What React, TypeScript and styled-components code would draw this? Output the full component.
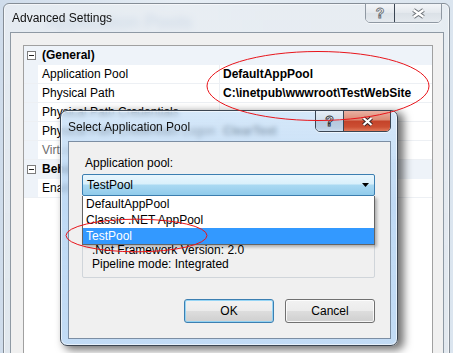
import React from 'react';
import styled, { createGlobalStyle } from 'styled-components';

const Global = createGlobalStyle`
  html, body { margin: 0; padding: 0; }
  body {
    font-family: "Liberation Sans", Arial, sans-serif;
    font-size: 12px;
    color: #000;
  }
  * { box-sizing: border-box; }
`;

const Desktop = styled.div`
  position: relative;
  width: 453px;
  height: 353px;
  overflow: hidden;
  background: linear-gradient(90deg, #cfdceb, #e6edf4 40%, #dbe5ef);
`;

const BackWindow = styled.div`
  position: absolute;
  inset: 0;
  padding: 11px 0 0 46px;
`;

const BackHeading = styled.div`
  font-size: 19px;
  color: #2f64a8;
`;

/* ---------- outer (inactive) window ---------- */

const OuterWindow = styled.div`
  position: absolute;
  left: 3px;
  top: 3px;
  width: 447px;
  height: 356px;
  display: flex;
  flex-direction: column;
  border: 1px solid #858d96;
  border-radius: 6px 6px 0 0;
  background: linear-gradient(rgba(232, 237, 242, 0.86), rgba(226, 232, 238, 0.9));
  backdrop-filter: blur(3px);
  box-shadow: inset 0 0 0 1px rgba(255, 255, 255, 0.55);
  padding: 0 5px 0 6px;
`;

const TitleBar = styled.div<{ $h: number; $mr: number }>`
  display: flex;
  align-items: flex-start;
  height: ${(p) => p.$h}px;
  flex: none;
  margin-right: ${(p) => p.$mr}px;
`;

const TitleText = styled.div<{ $top: number; $left: number }>`
  padding-top: ${(p) => p.$top}px;
  padding-left: ${(p) => p.$left}px;
  line-height: 14px;
  font-size: 12px;
  color: #111;
  white-space: nowrap;
`;

const CaptionGroup = styled.div<{ $active?: boolean }>`
  display: flex;
  margin-left: auto;
  margin-top: -1px;
  height: ${(p) => (p.$active ? 22 : 20)}px;
  border: 1px solid ${(p) => (p.$active ? '#3a4553' : '#8f98a2')};
  border-radius: 0 0 5px 5px;
  overflow: hidden;
  box-shadow: 0 1px 0 rgba(255, 255, 255, 0.6);
`;

const CaptionButton = styled.div<{ $kind: 'help' | 'close'; $active?: boolean; $w: number }>`
  width: ${(p) => p.$w}px;
  display: flex;
  align-items: center;
  justify-content: center;
  font-weight: bold;
  font-size: 14px;
  line-height: 14px;
  color: #fff;
  -webkit-text-stroke: 0.9px ${(p) => (p.$active ? '#2a2f36' : '#6c7177')};
  background: ${(p) =>
    !p.$active
      ? 'linear-gradient(#f3f5f8, #e3e8ed 50%, #dbe1e7 51%, #e4e9ee)'
      : p.$kind === 'help'
      ? 'linear-gradient(#e7eef6, #d1dfec 45%, #b5c8dc 50%, #bcd0e4 85%, #cadcee)'
      : 'linear-gradient(#eab1a3, #dc8a73 45%, #c4432a 50%, #cc4f33 80%, #e0795a)'};
  & + & {
    border-left: 1px solid ${(p) => (p.$active ? '#3a4553' : '#9aa3ac')};
  }
`;

const ClientArea = styled.div`
  flex: 1;
  display: flex;
  flex-direction: column;
  border: 1px solid #8e99a4;
  border-bottom: none;
  background: #f0f0f0;
  padding: 12px 10px 0 12px;
`;

const Grid = styled.div`
  flex: 1;
  border: 1px solid #a0a0a0;
  background: #fff;
  display: flex;
  flex-direction: column;
`;

const CategoryRow = styled.div`
  display: grid;
  grid-template-columns: 14px 1fr;
  height: 19px;
  background: #eef3f9;
  border-bottom: 1px solid #eef3f9;
  font-weight: bold;
  line-height: 18px;
`;

const PropertyRow = styled.div`
  display: grid;
  grid-template-columns: 14px 181px 1fr;
  height: 19px;
  border-bottom: 1px solid #edf0f4;
  line-height: 18px;
`;

const Margin = styled.div`
  background: #eef3f9;
  display: flex;
  align-items: center;
  justify-content: center;
`;

const Expander = styled.div`
  width: 9px;
  height: 9px;
  border: 1px solid #7c7c7c;
  background: #fff;
  position: relative;
  display: flex;
  align-items: center;
  justify-content: center;
  &::after {
    content: '';
    width: 5px;
    height: 1px;
    background: #222;
  }
`;

const CategoryName = styled.div`
  padding-left: 4px;
  white-space: nowrap;
`;

const Label = styled.div<{ $readOnly?: boolean }>`
  padding-left: 4px;
  white-space: nowrap;
  overflow: hidden;
  color: ${(p) => (p.$readOnly ? '#6d6d6d' : '#000')};
`;

const Value = styled.div`
  border-left: 1px solid #edf0f4;
  padding-left: 3px;
  font-weight: bold;
  white-space: nowrap;
  overflow: hidden;
`;

/* ---------- dialog ---------- */

const Dialog = styled.div`
  position: absolute;
  left: 60px;
  top: 110px;
  width: 338px;
  height: 236px;
  display: flex;
  flex-direction: column;
  border: 1px solid #3c4652;
  border-radius: 7px;
  padding: 0 6px 6px 7px;
  background: linear-gradient(rgba(196, 222, 247, 0.7), rgba(178, 210, 242, 0.82) 40%, rgba(186, 215, 244, 0.88));
  backdrop-filter: blur(2.5px);
  box-shadow: inset 0 0 0 1px rgba(255, 255, 255, 0.6), 5px 3px 9px 1px rgba(0, 0, 0, 0.55);
`;

const DialogClient = styled.div`
  flex: 1;
  display: flex;
  flex-direction: column;
  border: 1px solid #7c8ea3;
  background: #f0f0f0;
  padding: 14px 15px 15px 13px;
`;

const FieldLabel = styled.div`
  line-height: 14px;
  padding-left: 3px;
`;

const ComboWrap = styled.div`
  position: relative;
  margin-top: 4px;
`;

const Combo = styled.div`
  height: 22px;
  display: flex;
  align-items: center;
  justify-content: space-between;
  border: 1px solid #3c7fb1;
  border-radius: 2px;
  padding: 0 5px 0 4px;
  background: linear-gradient(#e9f6fd, #d9f0fb 45%, #aad9f2 50%, #90cbeb 100%);
`;

const DropList = styled.div`
  position: absolute;
  top: 100%;
  left: 0;
  right: 0;
  background: #fff;
  border: 1px solid #646464;
  border-top: none;
  box-shadow: 2px 2px 3px rgba(0, 0, 0, 0.28);
  z-index: 2;
`;

const DropItem = styled.div<{ $selected?: boolean }>`
  height: 16px;
  line-height: 16px;
  padding-left: 3px;
  background: ${(p) => (p.$selected ? '#3399ff' : 'transparent')};
  color: ${(p) => (p.$selected ? '#fff' : '#000')};
`;

const PropsBox = styled.div`
  margin-top: 18px;
  border: 1px solid #d0d5da;
  border-radius: 2px;
  padding: 4px 9px 6px;
  line-height: 14px;
`;

const ButtonRow = styled.div`
  display: flex;
  justify-content: flex-end;
  gap: 11px;
  margin-top: 21px;
`;

const Button = styled.div<{ $default?: boolean }>`
  width: 90px;
  height: 24px;
  display: flex;
  align-items: center;
  justify-content: center;
  border: 1px solid ${(p) => (p.$default ? '#3c7fb1' : '#707070')};
  border-radius: 3px;
  background: linear-gradient(#f2f2f2, #ebebeb 50%, #dddddd 51%, #cfcfcf);
  box-shadow: inset 0 0 0 1px ${(p) => (p.$default ? 'rgba(140, 210, 245, 0.9)' : 'rgba(255,255,255,0.8)')};
`;

const Annotations = styled.svg`
  position: absolute;
  inset: 0;
  pointer-events: none;
  z-index: 5;
`;

const CloseGlyph = ({ w, h, outline }: { w: number; h: number; outline: string }) => (
  <svg width={w} height={h} viewBox={`0 0 ${w} ${h}`}>
    <path d={`M2.5 2 L${w - 2.5} ${h - 2} M${w - 2.5} 2 L2.5 ${h - 2}`} stroke={outline} strokeWidth={4.2} />
    <path d={`M2.5 2 L${w - 2.5} ${h - 2} M${w - 2.5} 2 L2.5 ${h - 2}`} stroke="#fff" strokeWidth={2.2} />
  </svg>
);

const props = [
  { label: 'Application Pool', value: 'DefaultAppPool' },
  { label: 'Physical Path', value: 'C:\\inetpub\\wwwroot\\TestWebSite' },
  { label: 'Physical Path Credentials', value: '' },
  { label: 'Physical Path Credentials Logon Type', value: 'ClearText' },
  { label: 'Virtual Path', value: '/', readOnly: true },
];

export default function App() {
  return (
    <>
      <Global />
      <Desktop>
        <BackWindow>
          <BackHeading>Application Pools</BackHeading>
        </BackWindow>

        <OuterWindow>
          <TitleBar $h={28} $mr={2}>
            <TitleText $top={7} $left={2}>Advanced Settings</TitleText>
            <CaptionGroup>
              <CaptionButton $kind="help" $w={28}>?</CaptionButton>
              <CaptionButton $kind="close" $w={47}>
                <CloseGlyph w={15} h={11} outline="#6c7177" />
              </CaptionButton>
            </CaptionGroup>
          </TitleBar>
          <ClientArea>
            <Grid>
              <CategoryRow>
                <Margin>
                  <Expander />
                </Margin>
                <CategoryName>(General)</CategoryName>
              </CategoryRow>
              {props.map((p) => (
                <PropertyRow key={p.label}>
                  <Margin />
                  <Label $readOnly={p.readOnly}>{p.label}</Label>
                  <Value>{p.value}</Value>
                </PropertyRow>
              ))}
              <CategoryRow>
                <Margin>
                  <Expander />
                </Margin>
                <CategoryName>Behavior</CategoryName>
              </CategoryRow>
              <PropertyRow>
                <Margin />
                <Label>Enabled Protocols</Label>
                <Value>http</Value>
              </PropertyRow>
            </Grid>
          </ClientArea>
        </OuterWindow>

        <Dialog>
          <TitleBar $h={30} $mr={0}>
            <TitleText $top={9} $left={0}>Select Application Pool</TitleText>
            <CaptionGroup $active>
              <CaptionButton $kind="help" $active $w={27}>?</CaptionButton>
              <CaptionButton $kind="close" $active $w={47}>
                <CloseGlyph w={13} h={11} outline="#3a2626" />
              </CaptionButton>
            </CaptionGroup>
          </TitleBar>
          <DialogClient>
            <FieldLabel>Application pool:</FieldLabel>
            <ComboWrap>
              <Combo>
                <span>TestPool</span>
                <svg width="7" height="4" viewBox="0 0 7 4">
                  <path d="M0 0 H7 L3.5 4 Z" fill="#000" />
                </svg>
              </Combo>
              <DropList>
                <DropItem>DefaultAppPool</DropItem>
                <DropItem>Classic .NET AppPool</DropItem>
                <DropItem $selected>TestPool</DropItem>
              </DropList>
            </ComboWrap>
            <FieldLabel style={{ marginTop: 10 }}>Properties:</FieldLabel>
            <PropsBox>
              <div>.Net Framework Version: 2.0</div>
              <div>Pipeline mode: Integrated</div>
            </PropsBox>
            <ButtonRow>
              <Button $default>OK</Button>
              <Button>Cancel</Button>
            </ButtonRow>
          </DialogClient>
        </Dialog>

        <Annotations width="453" height="353" viewBox="0 0 453 353">
          <ellipse cx="318" cy="86" rx="111" ry="34.5" fill="none" stroke="#e8141a" strokeWidth="1" />
          <ellipse cx="136.5" cy="235.5" rx="70.5" ry="16.3" fill="none" stroke="#e8141a" strokeWidth="1" />
        </Annotations>
      </Desktop>
    </>
  );
}
